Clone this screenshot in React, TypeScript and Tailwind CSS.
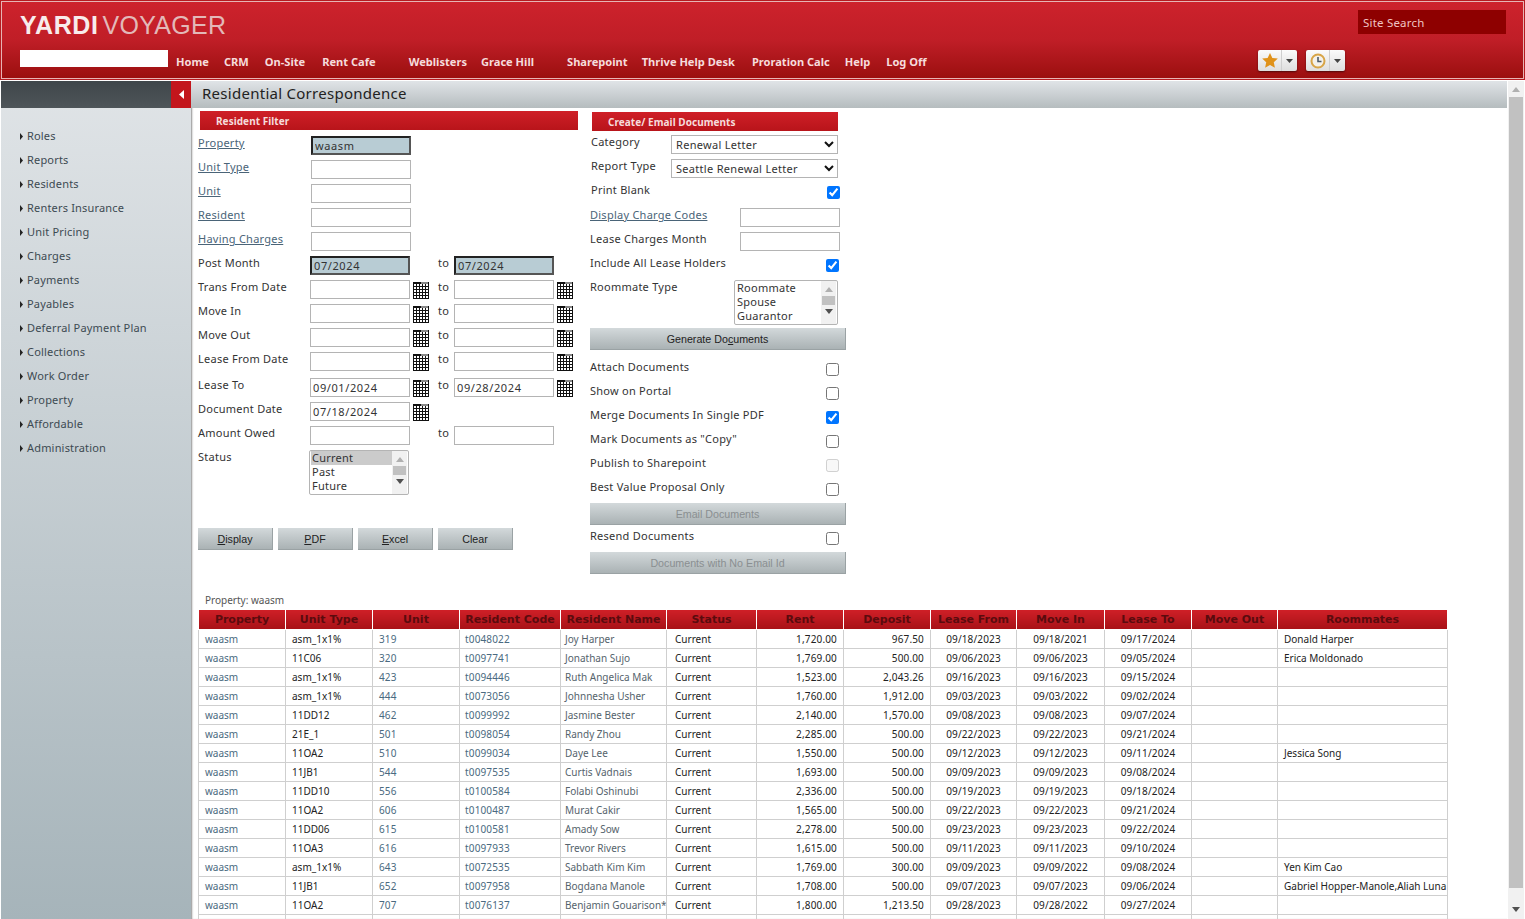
import React from "react";

const FONT = "font-['Noto_Sans','DejaVu_Sans',sans-serif]";
const LABEL = "text-[11px] tracking-[0.25px] text-[#333] leading-[22px] whitespace-nowrap";
const LINK = "text-[11px] tracking-[0.25px] text-[#4a6478] underline leading-[22px] whitespace-nowrap";

function Cal() {
  return (
    <svg width="16" height="17" viewBox="0 0 16 17" className="block shrink-0">
      <rect x="0" y="0" width="16" height="17" fill="#111" />
      <rect x="8" y="0" width="7" height="2" fill="#888" />
      {[2, 5, 8, 11, 14].map((y) => [1, 4, 7, 10, 13].map((x) => (
        <rect key={`${x}-${y}`} x={x} y={y} width="2" height="2" fill="#fff" />
      )))}
    </svg>
  );
}

function Field({ value = "", active = false, w = "w-[100px]" }: { value?: string; active?: boolean; w?: string }) {
  return (
    <input
      readOnly
      value={value}
      className={`${w} block h-[19px] shrink-0 text-[11px] tracking-[0.6px] text-[#333] outline-none ${active ? "border-2 border-t-[#222] border-l-[#222] border-r-[#555] border-b-[#555] bg-[#b8ccd4] pl-[2px]" : "border border-[#b4b4b4] bg-white pl-[2px]"}`}
    />
  );
}

function Row({ label, link, children, h = "h-[24px]" }: { label: string; link?: boolean; children?: React.ReactNode; h?: string }) {
  return (
    <div className={`flex items-start ${h}`}>
      <div className={`w-[112px] shrink-0 ${link ? LINK : LABEL}`}>{label}</div>
      {children}
    </div>
  );
}

function DateRow({ label, a = "", b = "", active = false, cal = true, second = true, h }: { label: string; a?: string; b?: string; active?: boolean; cal?: boolean; second?: boolean; h?: string }) {
  return (
    <Row label={label} h={h}>
      <div className="mt-[4px] flex items-start">
        <Field value={a} active={active} />
        <div className="ml-[3px] mt-[2px] w-[16px]">{cal && <Cal />}</div>
        {second && (
          <>
            <div className={`ml-[9px] -mt-[4px] w-[16px] ${LABEL}`}>to</div>
            <Field value={b} active={active} />
            <div className="ml-[3px] mt-[2px] w-[16px]">{cal && <Cal />}</div>
          </>
        )}
      </div>
    </Row>
  );
}

function ListBox({ items, selected, className }: { items: string[]; selected?: number; className: string }) {
  return (
    <div className={`h-[45px] w-[100px] shrink-0 flex border border-[#b4b4b4] rounded-[2px] bg-white px-px ${className}`}>
      <div className="flex-1">
        {items.map((t, i) => (
          <div key={t} className={`h-[14px] pl-px text-[11px] leading-[14px] tracking-[0.25px] text-[#333] ${i === selected ? "bg-[#cbcbcb]" : ""}`}>{t}</div>
        ))}
      </div>
      <div className="w-[15px] flex flex-col items-center bg-[#f1f1f1]">
        <svg width="8" height="5" viewBox="0 0 8 5" className="mt-[6px]"><path d="M4 0L8 5H0Z" fill="#b0b0b0" /></svg>
        <div className="mt-[4px] w-[13px] h-[9px] bg-[#c1c1c1]" />
        <svg width="8" height="5" viewBox="0 0 8 5" className="mt-[4px]"><path d="M0 0H8L4 5Z" fill="#505050" /></svg>
      </div>
    </div>
  );
}

function Btn({ children, w, disabled }: { children: React.ReactNode; w: string; disabled?: boolean }) {
  return (
    <button className={`${w} h-[22px] shrink-0 block bg-gradient-to-b from-[#d3d9db] to-[#aab2b4] border-b border-r border-[#9aa2a4] font-['Liberation_Sans',sans-serif] text-[10.7px] leading-[20px] text-center ${disabled ? "text-[#8a8f91]" : "text-[#222]"}`}>
      {children}
    </button>
  );
}

function Select({ value }: { value: string }) {
  return (
    <div className="mt-[4px] flex h-[19px] w-[167px] items-center justify-between border border-[#b4b4b4] bg-white pl-[4px] pr-[2px] text-[11px] tracking-[0.3px] text-[#333]">
      <span className="pt-px">{value}</span>
      <svg width="10" height="7" viewBox="0 0 10 7" className="mr-px"><path d="M1 1L5 5L9 1" stroke="#111" strokeWidth="2" fill="none" /></svg>
    </div>
  );
}

function Check({ label, checked, disabled }: { label: string; checked?: boolean; disabled?: boolean }) {
  return (
    <div className="flex h-[24px] items-start justify-between">
      <div className={LABEL}>{label}</div>
      <input type="checkbox" readOnly checked={!!checked} disabled={disabled} className="mt-[7px] mr-px h-[13px] w-[13px]" />
    </div>
  );
}

const NAV: [string, string][] = [
  ["Home", "ml-[8px]"], ["CRM", "ml-[15px]"], ["On-Site", "ml-[16px]"], ["Rent Cafe", "ml-[17px]"],
  ["Weblisters", "ml-[33px]"], ["Grace Hill", "ml-[14px]"], ["Sharepoint", "ml-[33px]"],
  ["Thrive Help Desk", "ml-[14px]"], ["Proration Calc", "ml-[17px]"], ["Help", "ml-[15px]"], ["Log Off", "ml-[16px]"],
];

const SIDE = ["Roles", "Reports", "Residents", "Renters Insurance", "Unit Pricing", "Charges", "Payments", "Payables", "Deferral Payment Plan", "Collections", "Work Order", "Property", "Affordable", "Administration"];

const COLS = [87, 87, 87, 101, 106, 90, 87, 87, 86, 88, 87, 86, 170];
const HEAD = ["Property", "Unit Type", "Unit", "Resident Code", "Resident Name", "Status", "Rent", "Deposit", "Lease From", "Move In", "Lease To", "Move Out", "Roommates"];

const DATA: string[][] = [
  ["asm_1x1%", "319", "t0048022", "Joy Harper", "1,720.00", "967.50", "09/18/2023", "09/18/2021", "09/17/2024", "Donald Harper"],
  ["11C06", "320", "t0097741", "Jonathan Sujo", "1,769.00", "500.00", "09/06/2023", "09/06/2023", "09/05/2024", "Erica Moldonado"],
  ["asm_1x1%", "423", "t0094446", "Ruth Angelica Mak", "1,523.00", "2,043.26", "09/16/2023", "09/16/2023", "09/15/2024", ""],
  ["asm_1x1%", "444", "t0073056", "Johnnesha Usher", "1,760.00", "1,912.00", "09/03/2023", "09/03/2022", "09/02/2024", ""],
  ["11DD12", "462", "t0099992", "Jasmine Bester", "2,140.00", "1,570.00", "09/08/2023", "09/08/2023", "09/07/2024", ""],
  ["21E_1", "501", "t0098054", "Randy Zhou", "2,285.00", "500.00", "09/22/2023", "09/22/2023", "09/21/2024", ""],
  ["11OA2", "510", "t0099034", "Daye Lee", "1,550.00", "500.00", "09/12/2023", "09/12/2023", "09/11/2024", "Jessica Song"],
  ["11JB1", "544", "t0097535", "Curtis Vadnais", "1,693.00", "500.00", "09/09/2023", "09/09/2023", "09/08/2024", ""],
  ["11DD10", "556", "t0100584", "Folabi Oshinubi", "2,336.00", "500.00", "09/19/2023", "09/19/2023", "09/18/2024", ""],
  ["11OA2", "606", "t0100487", "Murat Cakir", "1,565.00", "500.00", "09/22/2023", "09/22/2023", "09/21/2024", ""],
  ["11DD06", "615", "t0100581", "Amady Sow", "2,278.00", "500.00", "09/23/2023", "09/23/2023", "09/22/2024", ""],
  ["11OA3", "616", "t0097933", "Trevor Rivers", "1,615.00", "500.00", "09/11/2023", "09/11/2023", "09/10/2024", ""],
  ["asm_1x1%", "643", "t0072535", "Sabbath Kim Kim", "1,769.00", "300.00", "09/09/2023", "09/09/2022", "09/08/2024", "Yen Kim Cao"],
  ["11JB1", "652", "t0097958", "Bogdana Manole", "1,708.00", "500.00", "09/07/2023", "09/07/2023", "09/06/2024", "Gabriel Hopper-Manole,Aliah Luna"],
  ["11OA2", "707", "t0076137", "Benjamin Gouarison*", "1,800.00", "1,213.50", "09/28/2023", "09/28/2022", "09/27/2024", ""],
];

const TD = "h-[19px] border border-[#cfcfcf] p-0 text-[10px] leading-[18px] whitespace-nowrap overflow-hidden";
const NUM = "tracking-[0.15px]";

function Star() {
  return <svg width="16" height="15" viewBox="0 0 24 23"><path d="M12 0l3.6 7.6 8.4 1-6.2 5.7 1.7 8.3L12 18.4 4.5 22.6l1.7-8.3L0 8.6l8.4-1z" fill="#e0921a" /></svg>;
}
function Clock() {
  return (
    <svg width="16" height="16" viewBox="0 0 16 16">
      <circle cx="8" cy="8" r="6.5" fill="#f4f1ea" stroke="#d8a547" strokeWidth="2" />
      <path d="M8 4v4.5h3.5" stroke="#4a5a6a" strokeWidth="1.6" fill="none" />
    </svg>
  );
}
function DropBtn({ children, className }: { children: React.ReactNode; className?: string }) {
  return (
    <div className={`flex h-[21px] w-[39px] items-center rounded-[2px] bg-gradient-to-b from-[#fbfbfb] to-[#dedede] shadow-[0_1px_2px_rgba(0,0,0,0.5)] ${className ?? ""}`}>
      <div className="flex w-[24px] justify-center border-r border-[#cfcfcf] h-full items-center">{children}</div>
      <svg width="7" height="4" viewBox="0 0 7 4" className="ml-[4px]"><path d="M0 0H7L3.5 4Z" fill="#444" /></svg>
    </div>
  );
}

export default function App() {
  return (
    <div className={`h-screen w-full overflow-hidden bg-white flex flex-col ${FONT}`}>
      {/* header */}
      <header className="h-[80px] shrink-0 bg-[#b51a20] p-px">
        <div className="h-[78px] border border-[#e7b4b4] bg-gradient-to-b from-[#cd222c] via-[#c01e27] to-[#9b0f0e]">
          <div className="flex h-[46px] justify-between pl-[18px] pr-[17px]">
            <div className="mt-[8px] text-[25px] leading-[30px] font-['Liberation_Sans',sans-serif] whitespace-nowrap">
              <span className="font-bold tracking-[0.6px] text-[#f8ecec]">YARDI</span>
              <span className="ml-[4px] tracking-[0.3px] text-[#e3b8b8]">VOYAGER</span>
            </div>
            <div className="mt-[8px] h-[24px] w-[148px] bg-[#8e0000] pl-[5px] text-[11.5px] leading-[26px] tracking-[0.2px] text-[#f0c4c4]">Site Search</div>
          </div>
          <div className="flex items-start pl-[18px] pr-[178px]">
            <div className="mt-[2px] h-[17px] w-[148px] bg-white" />
            <nav className="flex">
              {NAV.map(([t, m]) => (
                <a key={t} className={`${m} mt-[5px] text-[11.1px] font-bold leading-[18px] text-[#f6dcdc] whitespace-nowrap`}>{t}</a>
              ))}
            </nav>
            <div className="flex-1" />
            <DropBtn className="mt-[2px]"><Star /></DropBtn>
            <DropBtn className="mt-[2px] ml-[9px]"><Clock /></DropBtn>
          </div>
        </div>
      </header>

      <div className="mt-px flex min-h-0 flex-1">
        {/* sidebar */}
        <aside className="ml-px w-[190px] shrink-0 flex flex-col bg-gradient-to-b from-[#e0e4e7] to-[#a6b4ba]">
          <div className="flex h-[27px] justify-end bg-gradient-to-b from-[#3f464a] to-[#4e5559]">
            <div className="flex h-full w-[20px] items-center justify-center bg-[#c3161c]">
              <svg width="5" height="9" viewBox="0 0 5 9"><path d="M5 0V9L0 4.5Z" fill="#fff" /></svg>
            </div>
          </div>
          <ul className="pt-[16px] pl-[19px]">
            {SIDE.map((s) => (
              <li key={s} className="flex h-[24px] items-center gap-[4px] text-[11px] tracking-[0.18px] text-[#3d4a52]">
                <svg width="3" height="7" viewBox="0 0 3 7"><path d="M0 0L3 3.5L0 7Z" fill="#222" /></svg>
                {s}
              </li>
            ))}
          </ul>
        </aside>

        {/* main */}
        <main className="min-w-0 flex-1 shadow-[inset_2px_0_2px_-1px_rgba(0,0,0,0.45)]">
          <div className="h-[27px] bg-gradient-to-b from-[#e0e4e7] to-[#b5bcbe] pl-[11px] text-[15px] leading-[25px] tracking-[0.27px] text-[#222]">Residential Correspondence</div>
          <div className="flex pl-[7px]">
            {/* left */}
            <section className="w-[383px] shrink-0">
              <div className="ml-[2px] mt-[3px] h-[19px] w-[378px] bg-gradient-to-b from-[#cf1f27] to-[#b8141a] pl-[16px] text-[10px] font-bold leading-[20px] tracking-[0.05px] text-[#f6dcdc]">Resident Filter</div>
              <div className="mt-[2px]">
                <Row label="Property" link><div className="ml-px mt-[4px]"><Field value="waasm" active /></div></Row>
                <Row label="Unit Type" link><div className="ml-px mt-[4px]"><Field /></div></Row>
                <Row label="Unit" link><div className="ml-px mt-[4px]"><Field /></div></Row>
                <Row label="Resident" link><div className="ml-px mt-[4px]"><Field /></div></Row>
                <Row label="Having Charges" link><div className="ml-px mt-[4px]"><Field /></div></Row>
                <DateRow label="Post Month" a="07/2024" b="07/2024" active cal={false} />
                <DateRow label="Trans From Date" />
                <DateRow label="Move In" />
                <DateRow label="Move Out" />
                <DateRow label="Lease From Date" h="h-[26px]" />
                <DateRow label="Lease To" a="09/01/2024" b="09/28/2024" />
                <DateRow label="Document Date" a="07/18/2024" second={false} />
                <DateRow label="Amount Owed" cal={false} />
                <Row label="Status" h="h-[82px]"><ListBox items={["Current", "Past", "Future"]} selected={0} className="mt-[4px] -ml-px" /></Row>
              </div>
              <div className="flex gap-[5px]">
                <Btn w="w-[75px]"><u>D</u>isplay</Btn>
                <Btn w="w-[75px]"><u>P</u>DF</Btn>
                <Btn w="w-[75px]"><u>E</u>xcel</Btn>
                <Btn w="w-[75px]">Clear</Btn>
              </div>
            </section>
            {/* right */}
            <section className="ml-[9px] w-[256px] shrink-0">
              <div className="ml-[2px] mt-[4px] h-[19px] w-[246px] bg-gradient-to-b from-[#cf1f27] to-[#b8141a] pl-[16px] text-[10px] font-bold leading-[20px] tracking-[0.05px] text-[#f6dcdc]">Create/ Email Documents</div>
              <div className="w-[250px]">
                <div className="flex h-[24px] justify-between pr-[2px] pl-px"><div className={LABEL}>Category</div><Select value="Renewal Letter" /></div>
                <div className="flex h-[24px] justify-between pr-[2px] pl-px"><div className={LABEL}>Report Type</div><Select value="Seattle Renewal Letter" /></div>
                <div className="flex h-[25px] items-start justify-between pl-px">
                  <div className={LABEL}>Print Blank</div>
                  <input type="checkbox" readOnly checked className="mt-[7px] h-[13px] w-[13px]" />
                </div>
                <div className="flex h-[24px] justify-between"><div className={LINK}>Display Charge Codes</div><div className="mt-[4px]"><Field /></div></div>
                <div className="flex h-[24px] justify-between"><div className={LABEL}>Lease Charges Month</div><div className="mt-[4px]"><Field /></div></div>
                <Check label="Include All Lease Holders" checked />
                <div className="flex h-[52px] items-start justify-between pr-[2px]">
                  <div className={LABEL}>Roommate Type</div>
                  <ListBox items={["Roommate", "Spouse", "Guarantor"]} className="mt-[4px] !w-[104px]" />
                </div>
              </div>
              <Btn w="w-[256px]">Generate Do<u>c</u>uments</Btn>
              <div className="mt-[6px] w-[250px]">
                <Check label="Attach Documents" />
                <Check label="Show on Portal" />
                <Check label="Merge Documents In Single PDF" checked />
                <Check label='Mark Documents as "Copy"' />
                <Check label="Publish to Sharepoint" disabled />
                <Check label="Best Value Proposal Only" />
              </div>
              <div className="mt-[3px]"><Btn w="w-[256px]" disabled>Email Documents</Btn></div>
              <div className="w-[250px]"><Check label="Resend Documents" /></div>
              <div className="mt-[3px]"><Btn w="w-[256px]" disabled>Documents with No Email Id</Btn></div>
            </section>
          </div>

          {/* table */}
          <div className="ml-[7px] mt-[19px]">
            <div className="h-[17px] pl-[7px] text-[10px] leading-[14px] text-[#555]">Property: waasm</div>
            <table className="w-[1249px] table-fixed border-collapse">
              <colgroup>{COLS.map((c, i) => <col key={i} style={{ width: c }} />)}</colgroup>
              <thead>
                <tr>
                  {HEAD.map((h) => (
                    <th key={h} className="h-[19px] border-x border-b border-white p-0 pt-px bg-gradient-to-b from-[#cf1f27] to-[#a81217] font-['DejaVu_Sans',sans-serif] text-[11px] font-bold leading-[17px] text-[#5a0b0e] text-center">{h}</th>
                  ))}
                </tr>
              </thead>
              <tbody>
                {DATA.map((r, i) => (
                  <tr key={i}>
                    <td className={`${TD} pl-[6px] text-[#4a6a80]`}>waasm</td>
                    <td className={`${TD} pl-[6px] text-[#222]`}>{r[0]}</td>
                    <td className={`${TD} ${NUM} pl-[6px] text-[#4a6a80]`}>{r[1]}</td>
                    <td className={`${TD} ${NUM} pl-[5px] text-[#4a6a80]`}>{r[2]}</td>
                    <td className={`${TD} pl-[4px] text-[#55636c]`}>{r[3]}</td>
                    <td className={`${TD} pl-[8px] text-[#222]`}>Current</td>
                    <td className={`${TD} ${NUM} pr-[6px] text-right text-[#222]`}>{r[4]}</td>
                    <td className={`${TD} ${NUM} pr-[6px] text-right text-[#222]`}>{r[5]}</td>
                    <td className={`${TD} ${NUM} text-center text-[#222]`}>{r[6]}</td>
                    <td className={`${TD} ${NUM} text-center text-[#222]`}>{r[7]}</td>
                    <td className={`${TD} ${NUM} text-center text-[#222]`}>{r[8]}</td>
                    <td className={TD}></td>
                    <td className={`${TD} pl-[6px] text-[#222]`}>{r[9]}</td>
                  </tr>
                ))}
                <tr>
                  {HEAD.map((h) => <td key={h} className={TD}></td>)}
                </tr>
              </tbody>
            </table>
          </div>
        </main>

        {/* scrollbar */}
        <div className="ml-px w-[16px] shrink-0 flex flex-col items-center bg-[#f1f1f1] mr-px">
          <svg width="8" height="5" viewBox="0 0 8 5" className="mt-[6px]"><path d="M4 0L8 5H0Z" fill="#b0b0b0" /></svg>
          <div className="mt-[5px] w-[14px] h-[791px] bg-[#c1c1c1]" />
          <svg width="8" height="5" viewBox="0 0 8 5" className="mt-auto mb-[7px]"><path d="M0 0H8L4 5Z" fill="#505050" /></svg>
        </div>
      </div>
    </div>
  );
}
